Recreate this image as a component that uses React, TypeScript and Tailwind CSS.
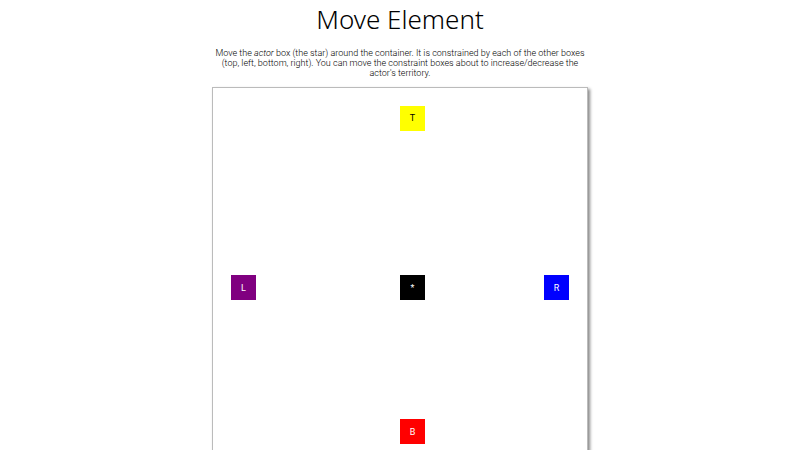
import { useRef, useState } from 'react';
import type { PointerEvent } from 'react';

type BoxId = 'top' | 'left' | 'bottom' | 'right' | 'actor';

// Distances from the container's left and top edges, in percent
interface Point {
  x: number;
  y: number;
}

interface BoxInfo {
  id: BoxId;
  label: string;
  className: string;
}

const SIZE = (25 / 374) * 100;
const EDGE = 4.8;
const FAR = 100 - EDGE - SIZE;

const BOXES: BoxInfo[] = [
  { id: 'top', label: 'T', className: 'bg-[#ffff00] text-black' },
  { id: 'left', label: 'L', className: 'bg-[#800080] text-white' },
  { id: 'bottom', label: 'B', className: 'bg-[#ff0000] text-white' },
  { id: 'right', label: 'R', className: 'bg-[#0000ff] text-white' },
  { id: 'actor', label: '*', className: 'bg-black text-white' },
];

const START: Record<BoxId, Point> = {
  top: { x: 50, y: EDGE },
  left: { x: EDGE, y: 50 },
  bottom: { x: 50, y: FAR },
  right: { x: FAR, y: 50 },
  actor: { x: 50, y: 50 },
};

function clamp(value: number, min: number, max: number): number {
  return Math.min(Math.max(value, min), max);
}

function constrain(id: BoxId, next: Point, all: Record<BoxId, Point>): Point {
  const { actor, top, left, bottom, right } = all;
  switch (id) {
    case 'top': return { x: top.x, y: clamp(next.y, 0, actor.y - SIZE) };
    case 'bottom': return { x: bottom.x, y: clamp(next.y, actor.y + SIZE, 100 - SIZE) };
    case 'left': return { x: clamp(next.x, 0, actor.x - SIZE), y: left.y };
    case 'right': return { x: clamp(next.x, actor.x + SIZE, 100 - SIZE), y: right.y };
    case 'actor': return {
      x: clamp(next.x, left.x + SIZE, right.x - SIZE),
      y: clamp(next.y, top.y + SIZE, bottom.y - SIZE),
    };
  }
}

function Container() {
  const ref = useRef<HTMLDivElement>(null);
  const [points, setPoints] = useState(START);
  const [dragging, setDragging] = useState<BoxId | null>(null);

  const handleDown = (id: BoxId) => (e: PointerEvent<HTMLButtonElement>) => {
    e.currentTarget.setPointerCapture(e.pointerId);
    setDragging(id);
  };

  const handleMove = (e: PointerEvent<HTMLButtonElement>) => {
    if (!dragging || !ref.current) return;
    const rect = ref.current.getBoundingClientRect();
    const next = {
      x: ((e.clientX - rect.left) / rect.width) * 100 - SIZE / 2,
      y: ((e.clientY - rect.top) / rect.height) * 100 - SIZE / 2,
    };
    setPoints(all => ({ ...all, [dragging]: constrain(dragging, next, all) }));
  };

  return (
    <div
      ref={ref}
      className="relative aspect-square w-full border border-[#bbb] bg-white shadow-[2px_2px_3px_#888]"
    >
      {BOXES.map(box => (
        <button
          key={box.id}
          type="button"
          aria-label={box.id}
          onPointerDown={handleDown(box.id)}
          onPointerMove={handleMove}
          onPointerUp={() => setDragging(null)}
          className={`absolute flex size-[25px] cursor-move touch-none items-center justify-center select-none ${box.className}`}
          style={{ left: `${points[box.id].x}%`, top: `${points[box.id].y}%` }}
        >
          {box.label}
        </button>
      ))}
    </div>
  );
}

export default function App() {
  return (
    <main className="mx-auto flex w-full max-w-[376px] flex-col items-center pb-6 font-[Roboto,sans-serif] text-[9px] leading-[10px]">
      <h1 className="pt-[3px] text-center font-['Noto_Sans',sans-serif] text-[26px] leading-8 font-light text-black">
        Move Element
      </h1>
      <p className="mt-[13px] mb-[9px] text-center font-light text-black">
        Move the <em>actor</em> box (the star) around the container. It is constrained by each of the other
        boxes (top, left, bottom, right). You can move the constraint boxes about to increase/decrease the
        actor's territory.
      </p>
      <Container />
    </main>
  );
}
